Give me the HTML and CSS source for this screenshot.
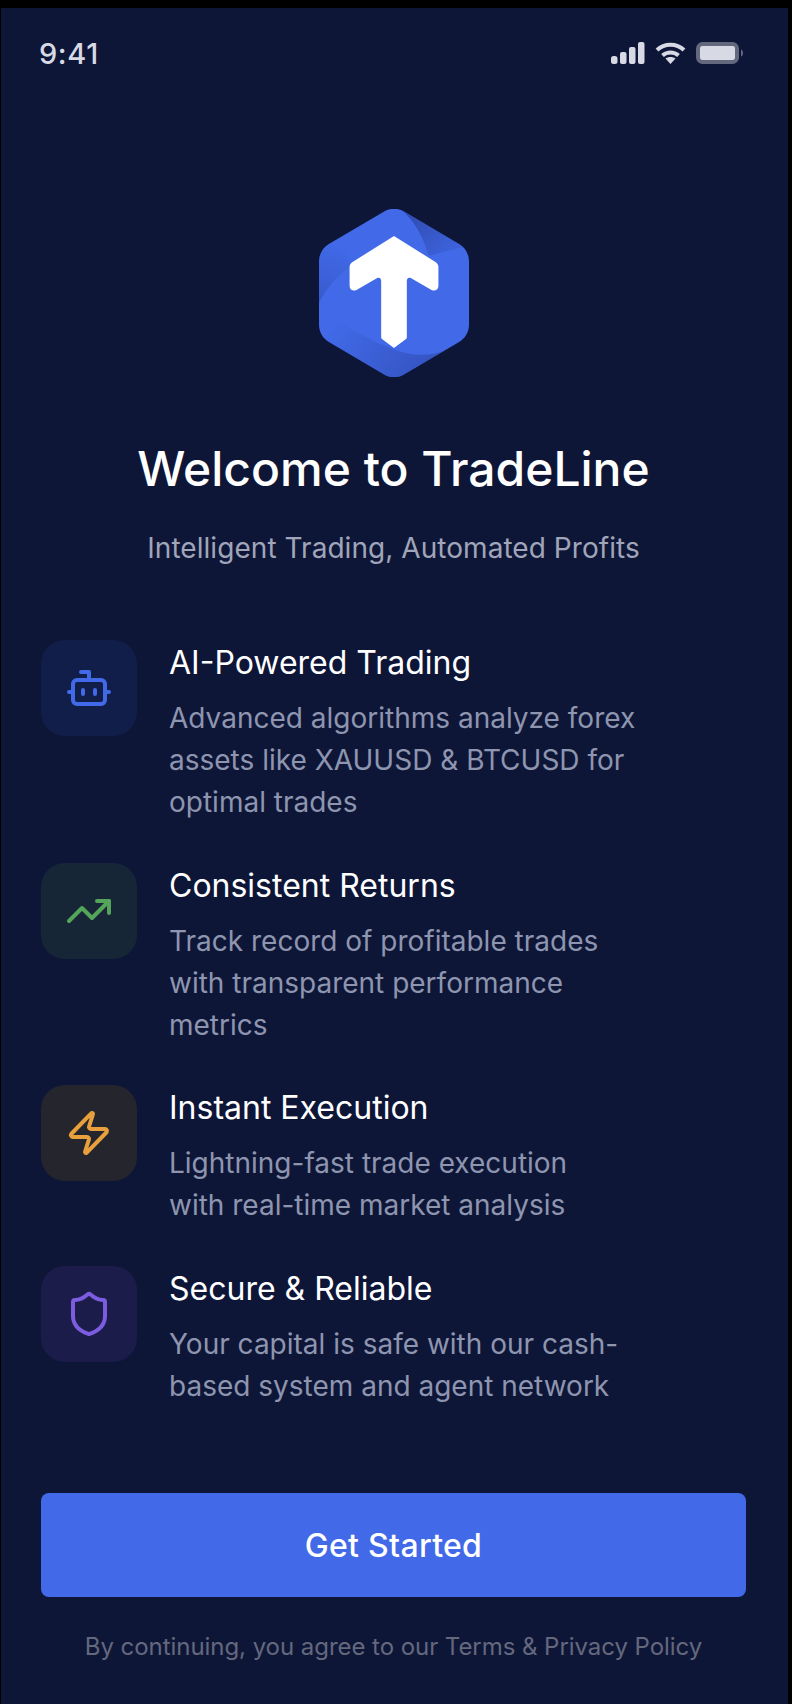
FILE: index.html
```html
<!DOCTYPE html>
<html lang="en">

<head>
    <meta charset="UTF-8">
    <meta name="viewport" content="width=device-width, initial-scale=1.0">
    <title>TradeLine</title>
    <link rel="stylesheet" href="styles.css">
</head>

<body>
    <main class="screen">
        <div class="status-bar">
            <span class="time">9:41</span>
            <div class="status-icons">
                <svg class="signal" width="34" height="22" viewBox="0 0 34 22">
                    <rect x="0" y="14" width="6.500" height="8" rx="2.500" />
                    <rect x="9" y="10" width="6.500" height="12" rx="2" />
                    <rect x="18" y="5" width="6.500" height="17" rx="2" />
                    <rect x="27" y="0" width="6.500" height="22" rx="2" />
                </svg>
                <svg class="wifi" width="31" height="22" viewBox="0 0 31 22">
                    <path d="M2 8c7.500-7 19.500-7 27 0" />
                    <path d="M7.500 13.500c4.500-4 11.500-4 16 0" />
                    <path class="wifi-dot" d="M15.500 22l-5-5.500c3-2 7-2 10 0z" />
                </svg>
                <svg class="battery" width="47" height="22" viewBox="0 0 47 22">
                    <rect class="battery-case" x="2" y="2" width="39" height="18" rx="4.500" />
                    <rect class="battery-fill" x="4" y="4" width="35" height="14" rx="2" />
                    <path class="battery-cap" d="M45 7.500c1.500 .5 2 2 2 3.500s-.5 3-2 3.500z" />
                </svg>
            </div>
        </div>

        <div class="hero">
            <svg class="logo" width="150" height="168" viewBox="0 0 152 168" preserveAspectRatio="none">
                <defs>
                    <path id="logo-hex" d="M66 2.500c6-3.500 14-3.500 20 0l56 32.500c6 3.500 10 10 10 17v64c0 7-4 13.500-10 17l-56 32.500c-6 3.500-14 3.500-20 0l-56-32.500c-6-3.500-10-10-10-17v-64c0-7 4-13.500 10-17z" />
                    <clipPath id="logo-clip">
                        <use href="#logo-hex" />
                    </clipPath>
                    <linearGradient id="shade-top" gradientUnits="userSpaceOnUse" x1="90" y1="5" x2="140" y2="62">
                        <stop offset="0" stop-color="rgb(48, 76, 178)" />
                        <stop offset="1" stop-color="rgb(48, 76, 178)" stop-opacity="0" />
                    </linearGradient>
                    <linearGradient id="shade-left" gradientUnits="userSpaceOnUse" x1="4" y1="90" x2="24" y2="38">
                        <stop offset="0" stop-color="rgb(48, 76, 178)" stop-opacity="0.5" />
                        <stop offset="1" stop-color="rgb(48, 76, 178)" stop-opacity="0" />
                    </linearGradient>
                    <linearGradient id="shade-bottom" gradientUnits="userSpaceOnUse" x1="25" y1="105" x2="105" y2="165">
                        <stop offset="0" stop-color="rgb(48, 76, 178)" stop-opacity="0" />
                        <stop offset="1" stop-color="rgb(48, 76, 178)" stop-opacity="0.7" />
                    </linearGradient>
                </defs>
                <use class="logo-base" href="#logo-hex" />
                <g clip-path="url(#logo-clip)">
                    <path fill="url(#shade-top)" d="M82 0c14 10 24 28 29 47 14-4 28-8 41-9V0z" />
                    <path fill="url(#shade-left)" d="M0 94c7-14 17-26 31-36L24 20 0 30z" />
                    <path fill="url(#shade-bottom)" d="M0 94c18 22 50 36 75 46 24 9 50 10 77-14v42H0z" />
                </g>
                <path class="logo-arrow" d="M76 27l42 26c2 1 3 3 3 5v19c0 4-4 5.500-7 4l-21-12c-2-1-4 0-4 3v56c0 1-.5 2-1.500 2.500l-11.500 8.500-11.500-8.500c-1-.5-1.500-1.500-1.500-2.500v-56c0-3-2-4-4-3l-21 12c-3 1.500-7 0-7-4v-19c0-2 1-4 3-5z" />
            </svg>
            <h1>Welcome to TradeLine</h1>
            <p class="tagline">Intelligent Trading, Automated Profits</p>
        </div>

        <ul class="features">
            <li class="feature">
                <div class="tile tile-blue">
                    <svg width="48" height="48" viewBox="0 0 24 24">
                        <path d="M12 8V4H8" />
                        <rect x="4" y="8" width="16" height="12" rx="2" />
                        <path d="M2 14h2M20 14h2M15 13v2M9 13v2" />
                    </svg>
                </div>
                <div class="feature-text">
                    <h2>AI-Powered Trading</h2>
                    <p>Advanced algorithms analyze forex assets like XAUUSD &amp; BTCUSD for optimal trades</p>
                </div>
            </li>
            <li class="feature">
                <div class="tile tile-green">
                    <svg width="48" height="48" viewBox="0 0 24 24">
                        <path d="M22 7l-8.500 8.500-5-5L2 17" />
                        <path d="M16 7h6v6" />
                    </svg>
                </div>
                <div class="feature-text">
                    <h2>Consistent Returns</h2>
                    <p>Track record of profitable trades with transparent performance metrics</p>
                </div>
            </li>
            <li class="feature">
                <div class="tile tile-orange">
                    <svg width="48" height="48" viewBox="0 0 24 24">
                        <path d="M4 14a1 1 0 0 1-.78-1.630l9.900-10.200a.5.5 0 0 1 .86.46l-1.920 6.020A1 1 0 0 0 13 10h7a1 1 0 0 1 .78 1.630l-9.900 10.200a.5.5 0 0 1-.86-.46l1.920-6.020A1 1 0 0 0 11 14z" />
                    </svg>
                </div>
                <div class="feature-text">
                    <h2>Instant Execution</h2>
                    <p>Lightning-fast trade execution<br>with real-time market analysis</p>
                </div>
            </li>
            <li class="feature">
                <div class="tile tile-purple">
                    <svg width="48" height="48" viewBox="0 0 24 24">
                        <path d="M20 13c0 5-3.500 7.500-7.660 8.950a1 1 0 0 1-.67-.01C7.500 20.500 4 18 4 13V6a1 1 0 0 1 1-1c2 0 4.500-1.200 6.240-2.720a1.170 1.170 0 0 1 1.520 0C14.510 3.810 17 5 19 5a1 1 0 0 1 1 1z" />
                    </svg>
                </div>
                <div class="feature-text">
                    <h2>Secure &amp; Reliable</h2>
                    <p>Your capital is safe with our cash-based system and agent network</p>
                </div>
            </li>
        </ul>

        <button class="cta">Get Started</button>
        <p class="legal">By continuing, you agree to our Terms &amp; Privacy Policy</p>
    </main>
</body>

</html>
```

FILE: styles.css
```css
* {
    box-sizing: border-box;
}

html,
body {
    height: 100%;
}

body {
    background-color: rgb(0, 0, 0);
    color: rgb(255, 255, 255);
    font-family: Inter, "Noto Sans", sans-serif;
    margin: 0;
    padding: 8px 4px 0 1px;
}

.screen {
    background-color: rgb(14, 22, 56);
    display: flex;
    flex-direction: column;
    height: 100%;
    padding: 0 42px 0 40px;
}

.status-bar {
    align-items: center;
    display: flex;
    height: 90px;
    justify-content: space-between;
    margin-left: -2px;
    padding-right: 3px;
}

.time {
    color: rgb(215, 217, 229);
    font-size: 29px;
    font-weight: 500;
    letter-spacing: 0.6px;
}

.status-icons {
    align-items: center;
    display: flex;
    gap: 10px;
}

.signal {
    fill: rgb(215, 217, 229);
}

.wifi path {
    fill: none;
    stroke: rgb(215, 217, 229);
    stroke-width: 4;
}

.wifi .wifi-dot {
    fill: rgb(215, 217, 229);
    stroke: none;
}

.battery-case {
    fill: none;
    stroke: rgb(100, 104, 125);
    stroke-width: 4;
}

.battery-fill {
    fill: rgb(215, 217, 229);
}

.battery-cap {
    fill: rgb(100, 104, 125);
}

.hero {
    align-items: center;
    display: flex;
    flex-direction: column;
    padding-top: 111px;
}

.logo-base {
    fill: rgb(65, 105, 232);
}

.logo-arrow {
    fill: rgb(255, 255, 255);
}

h1 {
    font-size: 48px;
    font-weight: 450;
    line-height: 58px;
    margin: 63px 0 0;
}

.tagline {
    color: rgb(160, 165, 185);
    font-size: 28px;
    letter-spacing: 0.05px;
    line-height: 36px;
    margin: 32px 0 0;
}

.features {
    display: flex;
    flex-direction: column;
    gap: 39.5px;
    list-style: none;
    margin: 74px 0 0;
    padding: 0;
}

.feature {
    display: flex;
    gap: 32px;
}

.tile {
    align-items: center;
    border-radius: 24px;
    display: flex;
    flex: none;
    height: 96px;
    justify-content: center;
    width: 96px;
}

.tile svg {
    fill: none;
    stroke-linecap: round;
    stroke-linejoin: round;
    stroke-width: 2;
}

.tile-blue {
    background-color: rgb(18, 30, 74);
}

.tile-blue svg {
    stroke: rgb(65, 105, 232);
}

.tile-green {
    background-color: rgb(22, 38, 54);
}

.tile-green svg {
    stroke: rgb(84, 165, 90);
}

.tile-orange {
    background-color: rgb(37, 37, 46);
}

.tile-orange svg {
    stroke: rgb(232, 160, 60);
}

.tile-purple {
    background-color: rgb(27, 28, 74);
}

.tile-purple svg {
    stroke: rgb(124, 92, 224);
}

.feature-text {
    padding-top: 3px;
    width: 480px;
}

h2 {
    font-size: 32px;
    font-weight: 400;
    line-height: 40px;
    margin: 0;
}

.feature-text p {
    color: rgb(142, 149, 175);
    font-size: 28px;
    line-height: 42px;
    margin: 14px 0 0;
}

.cta {
    background-color: rgb(65, 105, 232);
    border: none;
    border-radius: 8px;
    color: rgb(255, 255, 255);
    font-family: inherit;
    font-size: 32px;
    font-weight: 500;
    height: 104px;
    letter-spacing: 0.3px;
    margin-top: auto;
    width: 100%;
}

.legal {
    color: rgb(100, 104, 125);
    font-size: 24px;
    letter-spacing: -0.05px;
    line-height: 32px;
    margin: 34px 0 41px;
    text-align: center;
}
```
